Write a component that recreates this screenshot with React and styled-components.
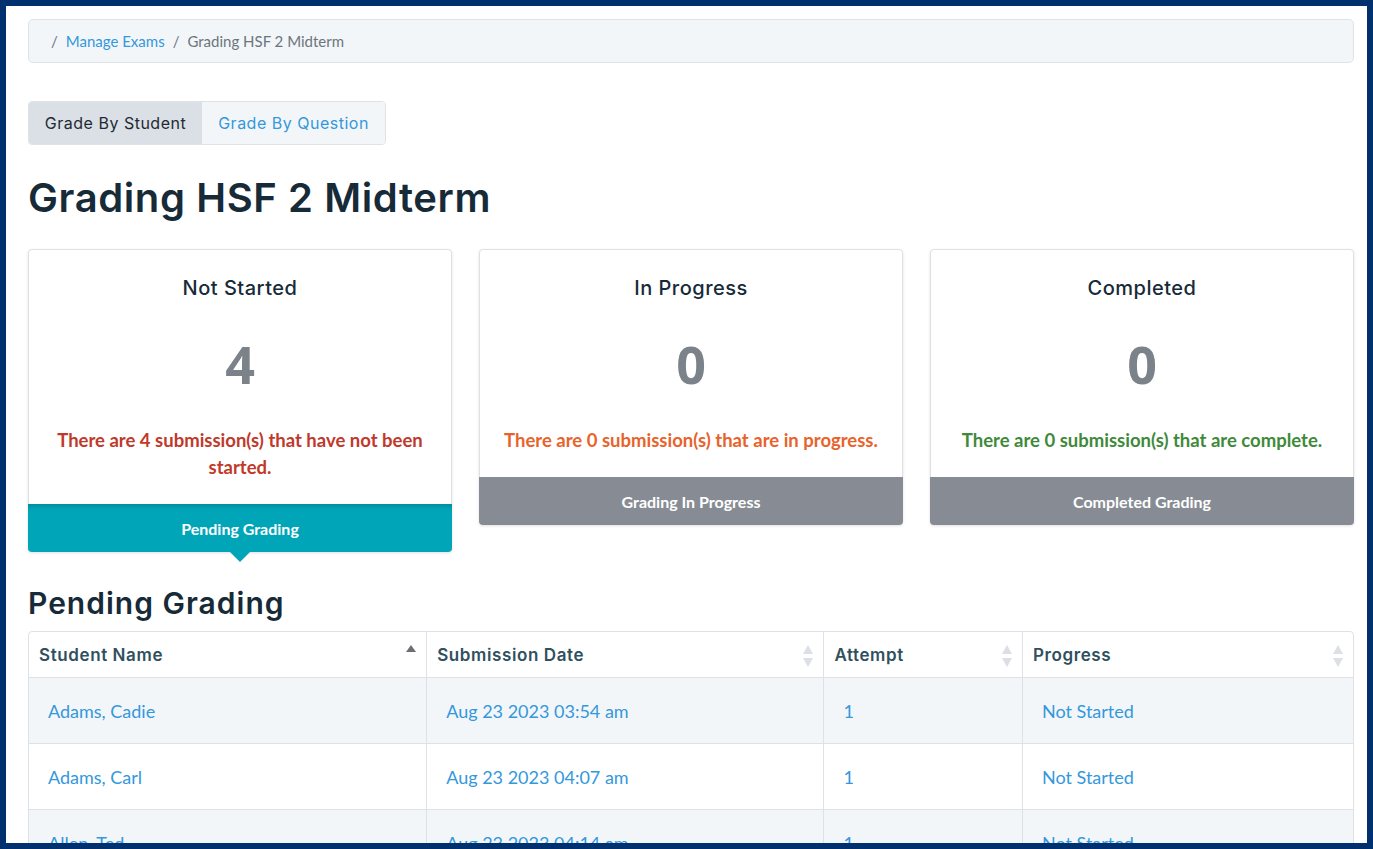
import React from 'react';
import styled, { createGlobalStyle } from 'styled-components';

const GlobalStyles = createGlobalStyle`
  html, body {
    margin: 0;
    padding: 0;
    background: #ffffff;
    font-family: Lato, 'Noto Sans', sans-serif;
  }
  *, *::before, *::after {
    box-sizing: border-box;
  }
`;

const Frame = styled.div`
  height: 100vh;
  border: 6px solid #00306e;
  overflow: hidden;
  background: #ffffff;
`;

const Page = styled.div`
  padding: 13px 13px 0 22px;
`;

const Breadcrumb = styled.nav`
  display: flex;
  align-items: center;
  gap: 8px;
  height: 44px;
  padding: 0 22px;
  background: #f3f6f9;
  border: 1px solid #dfe3e8;
  border-radius: 5px;
  font-size: 15px;
  color: #6c757d;
`;

const Slash = styled.span`
  color: #6c757d;
`;

const Crumb = styled.a`
  color: ${(p) => (p.$active ? '#6c757d' : '#3498db')};
  text-decoration: none;
`;

const TabGroup = styled.div`
  display: inline-flex;
  margin-top: 38px;
  height: 44px;
  border: 1px solid #dfe3e8;
  border-radius: 4px;
  overflow: hidden;
`;

const Tab = styled.button`
  width: ${(p) => p.$w}px;
  border: none;
  font-family: Inter, sans-serif;
  font-size: 16px;
  letter-spacing: 0.5px;
  background: ${(p) => (p.$active ? '#dae0e5' : '#f3f6f9')};
  color: ${(p) => (p.$active ? '#1f2a33' : '#3498db')};
  cursor: pointer;
`;

const Title = styled.h1`
  margin: 29px 0 0;
  font-family: Inter, sans-serif;
  font-weight: 600;
  font-size: 40px;
  line-height: 48px;
  letter-spacing: 0.6px;
  color: #172a38;
`;

const Cards = styled.div`
  display: grid;
  grid-template-columns: repeat(3, 1fr);
  gap: 27px;
  align-items: start;
  margin-top: 27px;
`;

const Card = styled.div`
  position: relative;
  display: flex;
  flex-direction: column;
  border: 1px solid #dfe1e5;
  border-radius: 4px;
  box-shadow: 0 1px 3px rgba(0, 0, 0, 0.12);
  background: #ffffff;
`;

const CardTitle = styled.div`
  margin-top: 26px;
  text-align: center;
  font-family: Inter, sans-serif;
  font-weight: 500;
  font-size: 20px;
  line-height: 24px;
  letter-spacing: 0.5px;
  color: #172a38;
`;

const Count = styled.div`
  margin-top: 34px;
  text-align: center;
  font-family: 'Open Sans', Lato, sans-serif;
  font-weight: 700;
  font-size: 52px;
  line-height: 60px;
  color: #7c828a;
`;

const Note = styled.div`
  margin: 33px 0 23px;
  padding: 0 22px;
  text-align: center;
  font-weight: 700;
  font-size: 18.5px;
  line-height: 27px;
  color: ${(p) => p.$color};
`;

const CardFooter = styled.div`
  position: relative;
  height: 48px;
  display: flex;
  align-items: center;
  justify-content: center;
  margin: 0 -1px -1px;
  border-radius: 0 0 4px 4px;
  background: ${(p) => (p.$active ? '#00a6b8' : '#878c94')};
  box-shadow: ${(p) => (p.$active ? 'inset 0 5px 5px -3px rgba(0, 0, 0, 0.18)' : 'none')};
  color: #ffffff;
  font-weight: 700;
  font-size: 16px;

  &::after {
    content: '';
    display: ${(p) => (p.$active ? 'block' : 'none')};
    position: absolute;
    left: 50%;
    bottom: -10px;
    margin-left: -10px;
    border-left: 10px solid transparent;
    border-right: 10px solid transparent;
    border-top: 10px solid #00a6b8;
  }
`;

const SectionTitle = styled.h2`
  margin: 34px 0 11px;
  font-family: Inter, sans-serif;
  font-weight: 600;
  font-size: 30px;
  line-height: 34px;
  letter-spacing: 1px;
  color: #172a38;
`;

const Table = styled.table`
  width: 100%;
  border-collapse: separate;
  border-spacing: 0;
  border: 1px solid #dee2e6;
  border-radius: 4px 4px 0 0;
  table-layout: fixed;
`;

const HeadCell = styled.th`
  position: relative;
  height: 46px;
  padding: 0 30px 0 10px;
  text-align: left;
  font-family: Inter, sans-serif;
  font-weight: 600;
  font-size: 17px;
  letter-spacing: 0.6px;
  color: #30505e;
  border-bottom: 1px solid #dee2e6;
  border-left: ${(p) => (p.$first ? 'none' : '1px solid #dee2e6')};
`;

const SortIcon = styled.svg`
  position: absolute;
  right: 9px;
  top: 12px;
`;

const Row = styled.tr`
  background: ${(p) => (p.$striped ? '#f3f6f9' : '#ffffff')};
`;

const Cell = styled.td`
  height: 66px;
  padding: 0 19px;
  font-size: 18px;
  color: #3498db;
  border-bottom: 1px solid #dee2e6;
  border-left: ${(p) => (p.$first ? 'none' : '1px solid #dee2e6')};
`;

const Sort = ({ active }) =>
  active ? (
    <SortIcon width="12" height="20" viewBox="0 0 12 20">
      <path d="M6 1 L11 8 L1 8 Z" fill="#6b6f73" />
    </SortIcon>
  ) : (
    <SortIcon width="12" height="24" viewBox="0 0 12 24">
      <path d="M6 1 L11 10 L1 10 Z" fill="#dcdfe3" />
      <path d="M6 23 L11 14 L1 14 Z" fill="#dcdfe3" />
    </SortIcon>
  );

const cards = [
  { title: 'Not Started', count: 4, note: 'There are 4 submission(s) that have not been started.', color: '#c0392b', footer: 'Pending Grading', active: true },
  { title: 'In Progress', count: 0, note: 'There are 0 submission(s) that are in progress.', color: '#e8632b', footer: 'Grading In Progress' },
  { title: 'Completed', count: 0, note: 'There are 0 submission(s) that are complete.', color: '#3f8a3a', footer: 'Completed Grading' },
];

const rows = [
  ['Adams, Cadie', 'Aug 23 2023 03:54 am', '1', 'Not Started'],
  ['Adams, Carl', 'Aug 23 2023 04:07 am', '1', 'Not Started'],
  ['Allen, Ted', 'Aug 23 2023 04:14 am', '1', 'Not Started'],
];

export default function App() {
  return (
    <>
      <GlobalStyles />
      <Frame>
        <Page>
          <Breadcrumb>
            <Slash>/</Slash>
            <Crumb href="#">Manage Exams</Crumb>
            <Slash>/</Slash>
            <Crumb $active>Grading HSF 2 Midterm</Crumb>
          </Breadcrumb>

          <TabGroup>
            <Tab $active $w={173}>Grade By Student</Tab>
            <Tab $w={183}>Grade By Question</Tab>
          </TabGroup>

          <Title>Grading HSF 2 Midterm</Title>

          <Cards>
            {cards.map((c) => (
              <Card key={c.title}>
                <CardTitle>{c.title}</CardTitle>
                <Count>{c.count}</Count>
                <Note $color={c.color}>{c.note}</Note>
                <CardFooter $active={c.active}>{c.footer}</CardFooter>
              </Card>
            ))}
          </Cards>

          <SectionTitle>Pending Grading</SectionTitle>

          <Table>
            <colgroup>
              <col style={{ width: '30%' }} />
              <col style={{ width: '30%' }} />
              <col style={{ width: '15%' }} />
              <col style={{ width: '25%' }} />
            </colgroup>
            <thead>
              <tr>
                <HeadCell $first>Student Name<Sort active /></HeadCell>
                <HeadCell>Submission Date<Sort /></HeadCell>
                <HeadCell>Attempt<Sort /></HeadCell>
                <HeadCell>Progress<Sort /></HeadCell>
              </tr>
            </thead>
            <tbody>
              {rows.map((r, i) => (
                <Row key={r[0]} $striped={i % 2 === 0}>
                  {r.map((v, j) => (
                    <Cell key={j} $first={j === 0}>{v}</Cell>
                  ))}
                </Row>
              ))}
            </tbody>
          </Table>
        </Page>
      </Frame>
    </>
  );
}
